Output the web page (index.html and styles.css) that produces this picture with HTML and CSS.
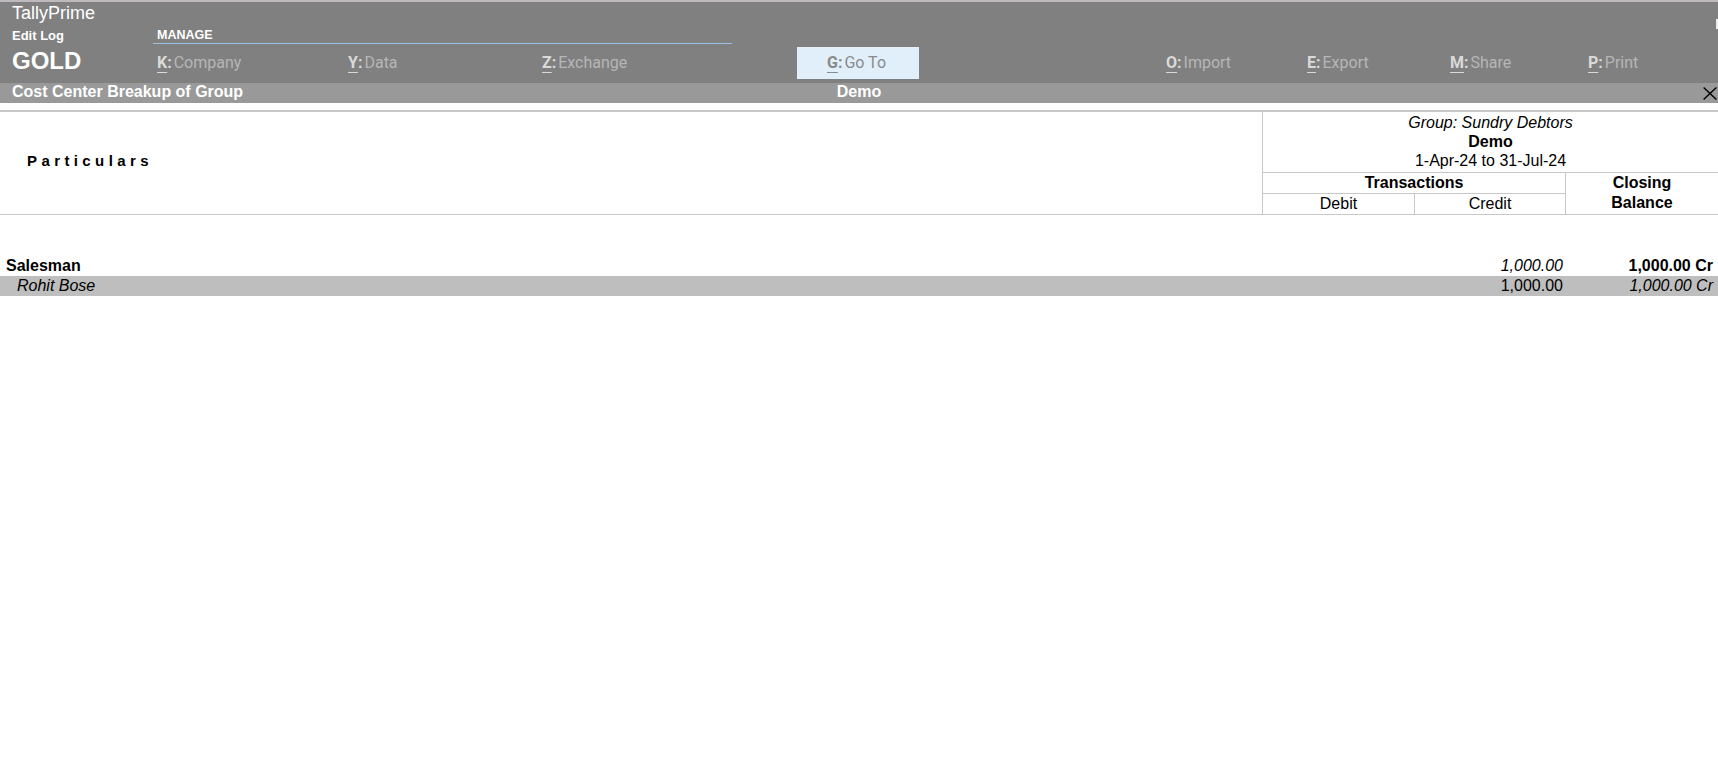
FILE: index.html
```html
<!DOCTYPE html>
<html lang="en">
<head>
<meta charset="utf-8">
<title>TallyPrime - Cost Center Breakup of Group</title>
<link rel="stylesheet" href="styles.css">
</head>
<body>
<div class="app">
  <header class="topbar">
    <div class="brand-row">
      <span class="brand">TallyPrime</span>
      <span class="brand-mark"></span>
    </div>
    <div class="tier2">
      <div class="edit-log">Edit Log</div>
      <div class="manage">MANAGE</div>
    </div>
    <div class="tier3">
      <div class="gold">GOLD</div>
      <nav class="menu">
        <div class="menu-item"><span class="key"><u>K</u>:</span>Company</div>
        <div class="menu-item"><span class="key"><u>Y</u>:</span>Data</div>
        <div class="menu-item"><span class="key"><u>Z</u>:</span>Exchange</div>
        <div class="menu-item goto"><span class="key"><u>G</u>:</span>Go To</div>
        <div class="menu-item"><span class="key"><u>O</u>:</span>Import</div>
        <div class="menu-item"><span class="key"><u>E</u>:</span>Export</div>
        <div class="menu-item"><span class="key"><u>M</u>:</span>Share</div>
        <div class="menu-item"><span class="key"><u>P</u>:</span>Print</div>
      </nav>
    </div>
  </header>

  <div class="titlebar">
    <span class="title-left">Cost Center Breakup of Group</span>
    <span class="title-center">Demo</span>
    <svg class="close" viewBox="0 0 14 13" width="14" height="13" aria-label="close">
      <path d="M0.6 0.5 L13.4 12.5 M13.4 0.5 L0.6 12.5" stroke="#000" stroke-width="1.4" fill="none"/>
    </svg>
  </div>

  <section class="report">
    <div class="report-head">
      <div class="particulars">Particulars</div>
      <div class="period">
        <div class="period-info">
          <div class="group">Group: Sundry Debtors</div>
          <div class="company">Demo</div>
          <div class="dates">1-Apr-24 to 31-Jul-24</div>
        </div>
        <div class="trans">Transactions</div>
        <div class="closing">Closing<br>Balance</div>
        <div class="debit">Debit</div>
        <div class="credit">Credit</div>
      </div>
    </div>

    <div class="lines">
      <div class="line group-row">
        <div class="name">Salesman</div>
        <div class="amt"></div>
        <div class="amt credit-amt italic">1,000.00</div>
        <div class="amt closing-amt bold">1,000.00 Cr</div>
      </div>
      <div class="line sub-row">
        <div class="name">Rohit Bose</div>
        <div class="amt"></div>
        <div class="amt credit-amt">1,000.00</div>
        <div class="amt closing-amt italic">1,000.00 Cr</div>
      </div>
    </div>
  </section>
</div>
</body>
</html>
```

FILE: styles.css
```css
* { box-sizing: border-box; }
html, body { margin: 0; padding: 0; }
body {
  background: #ffffff;
  font-family: "Liberation Sans", Arial, sans-serif;
  color: #000;
  width: 1718px;
  height: 773px;
  overflow: hidden;
}

/* ---------- top bar ---------- */
.topbar {
  background: #808080;
  border-top: 2px solid #bdb9bd;
  height: 83px;
  color: #fff;
}
.brand-row {
  height: 24px;
  padding: 1px 0 0 12px;
  display: flex;
  font-size: 18px;
  line-height: 21px;
}
.brand-mark {
  margin-left: auto;
  width: 2px;
  height: 10px;
  margin-top: 16px;
  background: #eeeeee;
}
.tier2 {
  display: flex;
  height: 18px;
}
.edit-log {
  width: 153px;
  padding: 1.5px 0 0 12px;
  font-size: 13px;
  font-weight: bold;
  line-height: 16px;
}
.manage {
  width: 579px;
  height: 18px;
  padding: 1.5px 0 0 4px;
  border-bottom: 1px solid #9cc2e5;
  font-size: 12.5px;
  font-weight: bold;
  line-height: 15px;
}
.tier3 {
  display: flex;
  height: 39px;
}
.gold {
  width: 157px;
  flex: none;
  padding: 2.5px 0 0 12px;
  font-size: 24px;
  font-weight: bold;
  line-height: 28px;
}
.menu {
  flex: 1;
  display: grid;
  grid-template-columns: 191px 194px 255px 369px 141px 143px 138px 1fr;
  font-family: Roboto, "Liberation Sans", sans-serif;
  font-size: 16px;
  line-height: 20px;
}
.menu-item {
  padding-top: 9px;
  color: #b6b6b6;
  white-space: nowrap;
}
.key {
  color: #dadada;
  font-weight: bold;
  margin-right: 2px;
}
.key u {
  text-decoration-thickness: 1px;
  text-underline-offset: 4px;
}
.menu-item.goto {
  justify-self: start;
  width: 122px;
  margin-top: 3px;
  height: 32px;
  padding: 6px 0 0 30px;
  background: #e1effa;
  color: #8a8a8a;
}
.goto .key { color: #8a8a8a; }

/* ---------- title bar ---------- */
.titlebar {
  height: 20px;
  background: #999999;
  display: grid;
  grid-template-columns: 1fr auto 1fr;
  align-items: start;
  color: #fff;
  font-weight: bold;
  font-size: 16px;
  line-height: 18px;
}
.title-left { padding-left: 12px; }
.close {
  justify-self: end;
  margin: 4px 1px 0 0;
}

/* ---------- report ---------- */
.report {
  margin-top: 7px;
  border-top: 2px solid #c8c8c8;
  font-size: 16px;
}
.report-head {
  display: grid;
  grid-template-columns: 1262px 1fr;
  height: 103px;
  border-bottom: 1px solid #c8c8c8;
}
.particulars {
  display: flex;
  align-items: center;
  padding: 0 0 5px 27px;
  font-weight: bold;
  font-size: 15px;
  letter-spacing: 4.4px;
}
.period {
  border-left: 1px solid #c8c8c8;
  display: grid;
  grid-template-columns: 151px 151px 1fr;
  grid-template-rows: 61px 21px 20px;
}
.period-info {
  grid-column: 1 / -1;
  border-bottom: 1px solid #c8c8c8;
  text-align: center;
  line-height: 19px;
  padding-top: 0.5px;
}
.period-info .group { font-style: italic; }
.period-info .company { font-weight: bold; }
.trans {
  grid-column: 1 / 3;
  grid-row: 2;
  border-bottom: 1px solid #c8c8c8;
  text-align: center;
  font-weight: bold;
  line-height: 20px;
}
.closing {
  grid-column: 3;
  grid-row: 2 / 4;
  border-left: 1px solid #c8c8c8;
  text-align: center;
  font-weight: bold;
  line-height: 20px;
}
.debit {
  grid-column: 1;
  grid-row: 3;
  text-align: center;
  line-height: 19px;
}
.credit {
  grid-column: 2;
  grid-row: 3;
  border-left: 1px solid #c8c8c8;
  text-align: center;
  line-height: 19px;
}

.lines { padding-top: 41px; }
.line {
  display: grid;
  grid-template-columns: 1263px 151px 151px 1fr;
  height: 20px;
  line-height: 20px;
  white-space: nowrap;
}
.amt { text-align: right; }
.credit-amt { padding-right: 2px; }
.closing-amt { padding-right: 5px; }
.italic { font-style: italic; }
.bold { font-weight: bold; }
.group-row .name {
  font-weight: bold;
  padding-left: 6px;
}
.sub-row { background: #bebebe; }
.sub-row .name {
  font-style: italic;
  padding-left: 17px;
}
```
